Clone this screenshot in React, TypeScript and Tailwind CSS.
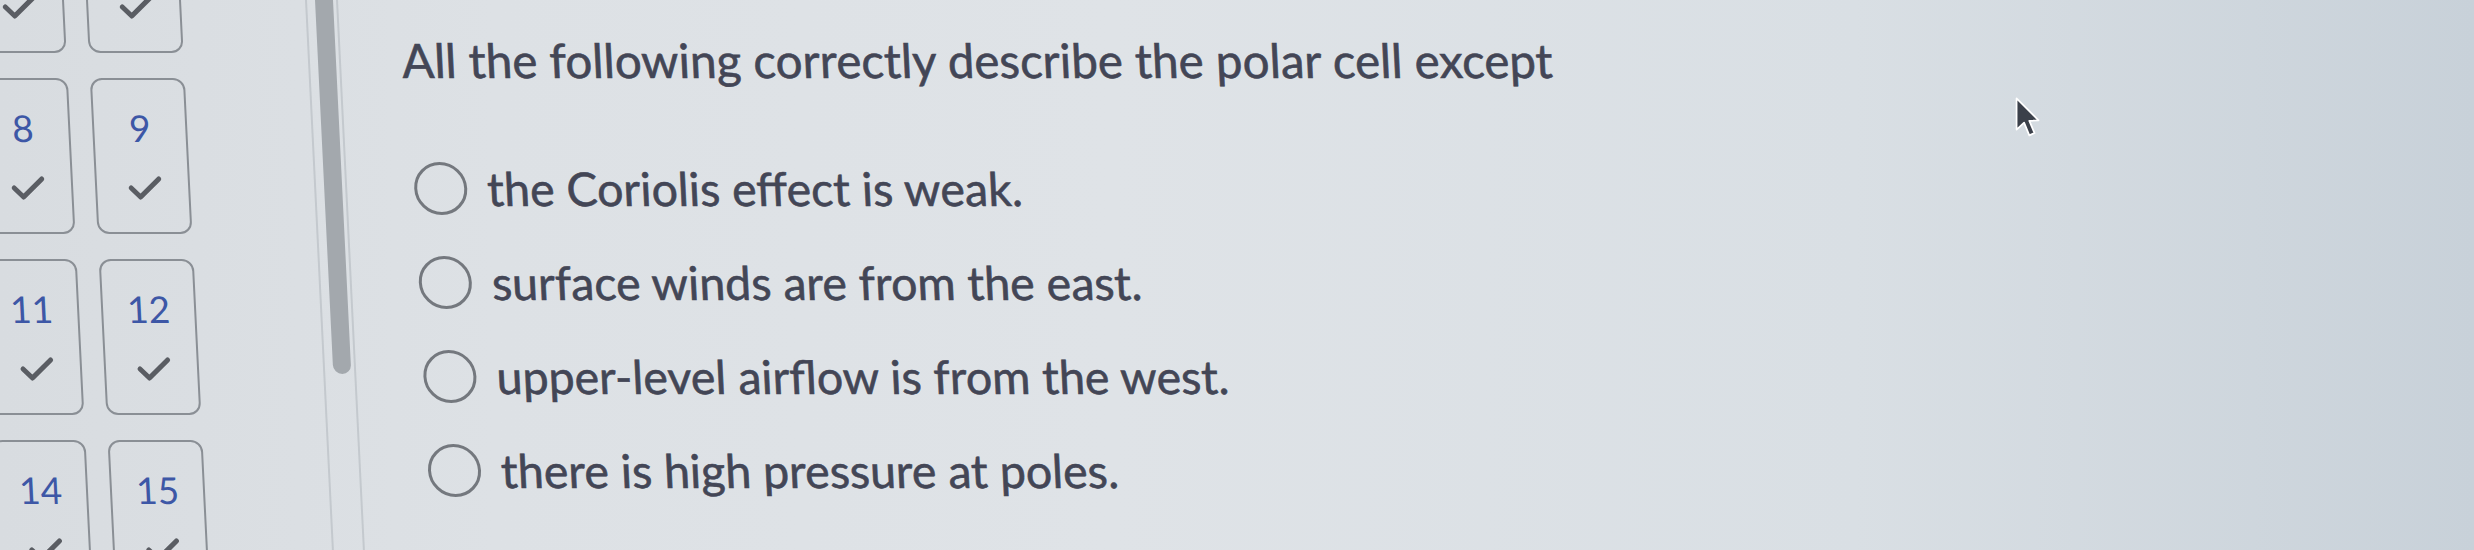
import React from "react";

const Check = () => (
  <svg width="34" height="28" viewBox="0 0 34 28" fill="none">
    <polyline
      points="3,14 12,23 31,5"
      stroke="#5a5d63"
      strokeWidth="5"
      strokeLinecap="round"
      strokeLinejoin="round"
    />
  </svg>
);

const Tile = ({ n }: { n: number }) => (
  <div className="flex h-[156px] w-[95px] flex-col items-center rounded-[12px] border-2 border-[#8a8f95] pt-[29px]">
    <span className="text-[37px] leading-none text-[#3d57a6]">{n}</span>
    <div className="mt-[28px] pl-[4px]">
      <Check />
    </div>
  </div>
);

const Option = ({ text }: { text: string }) => (
  <div className="flex h-[53px] items-center">
    <div className="h-[53px] w-[53px] shrink-0 rounded-full border-[3px] border-[#74787e]" />
    <span className="ml-[20px] whitespace-nowrap text-[46.5px] leading-none text-[#434656] [-webkit-text-stroke:0.6px_#434656]">
      {text}
    </span>
  </div>
);

export default function App() {
  const rows = [
    [4, 5, 6],
    [7, 8, 9],
    [10, 11, 12],
    [13, 14, 15],
  ];
  return (
    <div
      className="relative h-[550px] w-[2474px] overflow-hidden bg-[linear-gradient(90deg,#d8dce0_0%,#dde1e5_20%,#dfe3e7_45%,#d9dfe4_75%,#c8d1d9_100%)]"
      style={{ fontFamily: "Lato, 'Noto Sans', sans-serif" }}
    >
      <div className="flex h-[550px] origin-top-left skew-x-[2.8deg]">
        {/* sidebar with question tiles */}
        <div className="w-[305px] shrink-0">
          <div className="ml-[-148px] mt-[-103px] grid w-[329px] grid-cols-3 gap-x-[22px] gap-y-[25px]">
            {rows.flat().map((n) => (
              <Tile key={n} n={n} />
            ))}
          </div>
        </div>
        {/* scroll track */}
        <div className="h-[550px] w-[33px] shrink-0 border-x-2 border-[#c4c9ce]">
          <div className="ml-[8px] mt-[-30px] h-[404px] w-[18px] rounded-full bg-[#a3a8ad]" />
        </div>
        {/* main question */}
        <div className="flex flex-col pl-[61px] pt-[36px]">
          <h1 className="whitespace-nowrap text-[47.5px] font-normal leading-none text-[#434656] [-webkit-text-stroke:0.6px_#434656]">
            All the following correctly describe the polar cell except
          </h1>
          <div className="ml-[6px] mt-[78px] flex flex-col gap-[41px]">
            <Option text="the Coriolis effect is weak." />
            <Option text="surface winds are from the east." />
            <Option text="upper-level airflow is from the west." />
            <Option text="there is high pressure at poles." />
          </div>
        </div>
      </div>
      {/* mouse pointer */}
      <svg
        className="absolute left-[2012px] top-[96px]"
        width="30"
        height="44"
        viewBox="0 0 24 38"
      >
        <path
          d="M3 2 L3 29 L9.5 23 L14 34 L18.5 32 L14 21.5 L22 21 Z"
          fill="#3b404a"
          stroke="#ffffff"
          strokeWidth="1.5"
          strokeLinejoin="round"
        />
      </svg>
    </div>
  );
}
